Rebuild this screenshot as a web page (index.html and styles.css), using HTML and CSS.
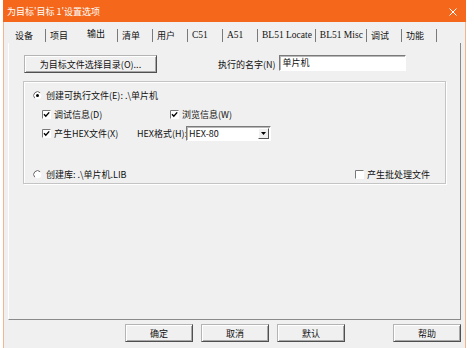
FILE: index.html
```html
<html lang="zh">
<head>
    <meta charset="UTF-8">
    <title>为目标'目标 1'设置选项</title>
    <link rel="stylesheet" href="styles.css">
</head>
<body>
    <div class="window">
        <div class="titlebar">
            <span class="title">为目标'目标 1'设置选项</span>
            <svg class="close" width="8" height="8" viewBox="0 0 8 8">
                <path d="M0.5 0.5 L7.5 7.5 M7.5 0.5 L0.5 7.5" stroke="#fff" stroke-width="1"/>
            </svg>
        </div>

        <div class="tabs">
            <span class="tab">设备</span>
            <span class="tab no-sep">项目</span>
            <span class="tab active">输出</span>
            <span class="tab">清单</span>
            <span class="tab">用户</span>
            <span class="tab latin">C51</span>
            <span class="tab latin">A51</span>
            <span class="tab latin">BL51 Locate</span>
            <span class="tab latin">BL51 Misc</span>
            <span class="tab">调试</span>
            <span class="tab">功能</span>
        </div>

        <div class="panel">
            <div class="top-row">
                <button class="btn btn-dir">为目标文件选择目录(O)...</button>
                <span class="name-label">执行的名字(N)</span>
                <div class="field name-field">单片机</div>
            </div>

            <div class="group">
                <div class="row">
                    <svg class="radio" width="9" height="9" viewBox="0 0 9 9">
                        <circle cx="4.5" cy="4.5" r="3.8" fill="#fff"/>
                        <path d="M7.2 1.8 A3.8 3.8 0 0 0 1.8 7.2" fill="none" stroke="#6a6a6a" stroke-width="1"/>
                        <circle cx="4.5" cy="4.5" r="1.5" fill="#000"/>
                    </svg>
                    <span>创建可执行文件(E): .\单片机</span>
                </div>
                <div class="row sub">
                    <span class="item col-debug">
                        <svg class="check" width="9" height="9" viewBox="0 0 9 9">
                            <rect x="0" y="0" width="9" height="9" fill="#fff"/>
                            <path d="M0.5 8.5 V0.5 H8.5" fill="none" stroke="#777" stroke-width="1"/>
                            <path d="M2 4.2 L3.8 6.2 L7.2 2.4" fill="none" stroke="#000" stroke-width="1.4"/>
                        </svg>
                        调试信息(D)
                    </span>
                    <span class="item">
                        <svg class="check" width="9" height="9" viewBox="0 0 9 9">
                            <rect x="0" y="0" width="9" height="9" fill="#fff"/>
                            <path d="M0.5 8.5 V0.5 H8.5" fill="none" stroke="#777" stroke-width="1"/>
                            <path d="M2 4.2 L3.8 6.2 L7.2 2.4" fill="none" stroke="#000" stroke-width="1.4"/>
                        </svg>
                        浏览信息(W)
                    </span>
                </div>
                <div class="row sub">
                    <span class="item col-hex">
                        <svg class="check" width="9" height="9" viewBox="0 0 9 9">
                            <rect x="0" y="0" width="9" height="9" fill="#fff"/>
                            <path d="M0.5 8.5 V0.5 H8.5" fill="none" stroke="#777" stroke-width="1"/>
                            <path d="M2 4.2 L3.8 6.2 L7.2 2.4" fill="none" stroke="#000" stroke-width="1.4"/>
                        </svg>
                        产生HEX文件(X)
                    </span>
                    <span class="hex-label">HEX格式(H):</span>
                    <div class="field select">
                        <span class="select-text">HEX-80</span>
                        <span class="select-btn">
                            <svg width="5" height="3" viewBox="0 0 5 3"><path d="M0 0 H5 L2.5 3 Z" fill="#000"/></svg>
                        </span>
                    </div>
                </div>
                <div class="row last">
                    <svg class="radio" width="9" height="9" viewBox="0 0 9 9">
                        <circle cx="4.5" cy="4.5" r="3.8" fill="#fff"/>
                        <path d="M7.2 1.8 A3.8 3.8 0 0 0 1.8 7.2" fill="none" stroke="#6a6a6a" stroke-width="1"/>
                    </svg>
                    <span>创建库: .\单片机.LIB</span>
                    <span class="item batch">
                        <svg class="check" width="9" height="9" viewBox="0 0 9 9">
                            <rect x="0" y="0" width="9" height="9" fill="#fff"/>
                            <path d="M0.5 8.5 V0.5 H8.5" fill="none" stroke="#777" stroke-width="1"/>
                        </svg>
                        产生批处理文件
                    </span>
                </div>
            </div>
        </div>

        <div class="buttons">
            <button class="btn btn-bottom">确定</button>
            <button class="btn btn-bottom">取消</button>
            <button class="btn btn-bottom">默认</button>
            <button class="btn btn-bottom btn-help">帮助</button>
        </div>
    </div>
</body>
</html>
```

FILE: styles.css
```css
body {
    margin: 0;
    background-color: #fff;
    font-family: "Noto Sans CJK SC", "Noto Sans", sans-serif;
    font-size: 9px;
    color: #111;
}
.window {
    margin-left: 3px;
    width: 463px;
    height: 348px;
    box-sizing: border-box;
    background-color: #f0f0f0;
    border-left: 1px solid #f3b48e;
    border-right: 1px solid #f3b48e;
}
.titlebar {
    height: 22px;
    margin: 0 -1px;
    background-color: #f5681c;
    color: #fff;
    display: flex;
    justify-content: space-between;
    align-items: center;
    padding: 2px 9px 0 4px;
    box-sizing: border-box;
}
.title {
    font-size: 9px;
    line-height: 12px;
}
.close {
    display: block;
}
.tabs {
    height: 21px;
    display: flex;
    align-items: flex-end;
    padding: 0 0 1px 7px;
    box-sizing: border-box;
}
.tab {
    min-width: 35px;
    height: 13px;
    line-height: 13px;
    padding: 0 2px 0 4px;
    box-sizing: border-box;
    border-right: 1px solid #7a7a7a;
    font-size: 9px;
    white-space: nowrap;
}
.tab.no-sep {
    border-right-color: transparent;
}
.tab.active {
    min-width: 37px;
    line-height: 9px;
    padding-left: 6px;
}
.tab.latin {
    font-family: "Liberation Serif", serif;
    font-size: 9.5px;
    padding-right: 3px;
}
.panel {
    margin-left: 4px;
    width: 453px;
    height: 277px;
    box-sizing: border-box;
    border-left: 1px solid #fff;
    border-right: 1px solid #888;
    border-bottom: 1px solid #8a8a8a;
    padding: 12px 0 0 15px;
}
.top-row {
    display: flex;
    align-items: center;
    height: 18px;
}
.btn {
    font-family: "Noto Sans CJK SC", "Noto Sans", sans-serif;
    font-size: 9px;
    color: #111;
    height: 18px;
    padding: 0;
    background-color: #f0f0f0;
    border: 1px solid;
    border-color: #b4b4b4 #505050 #505050 #b4b4b4;
    box-shadow: inset 1px 1px #fff, inset -1px -1px #a8a8a8;
    box-sizing: border-box;
}
.btn-dir {
    width: 133px;
}
.name-label {
    margin-left: 61px;
    white-space: nowrap;
}
.field {
    background-color: #fff;
    border: 1px solid;
    border-color: #7a7a7a #fff #fff #7a7a7a;
    box-shadow: inset 1px 1px #b8b8b8;
    box-sizing: border-box;
}
.name-field {
    margin-left: 3px;
    width: 127px;
    height: 16px;
    line-height: 14px;
    padding-left: 3px;
    margin-bottom: 2px;
}
.group {
    margin: 8px 0 0 -1px;
    width: 423px;
    height: 103px;
    box-sizing: border-box;
    border: 1px solid #c4c4c4;
    box-shadow: 1px 1px #fff, inset 1px 1px #fff;
    padding: 4px 15px 1px 9px;
    display: flex;
    flex-direction: column;
}
.row {
    height: 19px;
    display: flex;
    align-items: center;
    white-space: nowrap;
}
.row.sub {
    padding-left: 9px;
}
.row.last {
    margin-top: auto;
    height: 16px;
}
.radio {
    margin-right: 4px;
    flex-shrink: 0;
}
.item {
    display: flex;
    align-items: center;
}
.check {
    margin-right: 3px;
    flex-shrink: 0;
}
.col-debug {
    width: 128px;
}
.col-hex {
    width: 95px;
}
.hex-label {
    width: 49px;
}
.select {
    width: 85px;
    height: 15px;
    display: flex;
    align-items: center;
    justify-content: space-between;
    padding-left: 2px;
}
.select-text {
    line-height: 13px;
}
.select-btn {
    width: 11px;
    height: 11px;
    margin-right: 1px;
    background-color: #f0f0f0;
    border: 1px solid;
    border-color: #fff #555 #555 #fff;
    box-sizing: border-box;
    display: flex;
    align-items: center;
    justify-content: center;
}
.select-btn svg {
    display: block;
}
.batch {
    margin-left: auto;
}
.buttons {
    display: flex;
    gap: 8px;
    margin-top: 4px;
    padding: 0 4px 0 121px;
}
.btn-bottom {
    width: 68px;
}
.btn-help {
    margin-left: auto;
}
```
